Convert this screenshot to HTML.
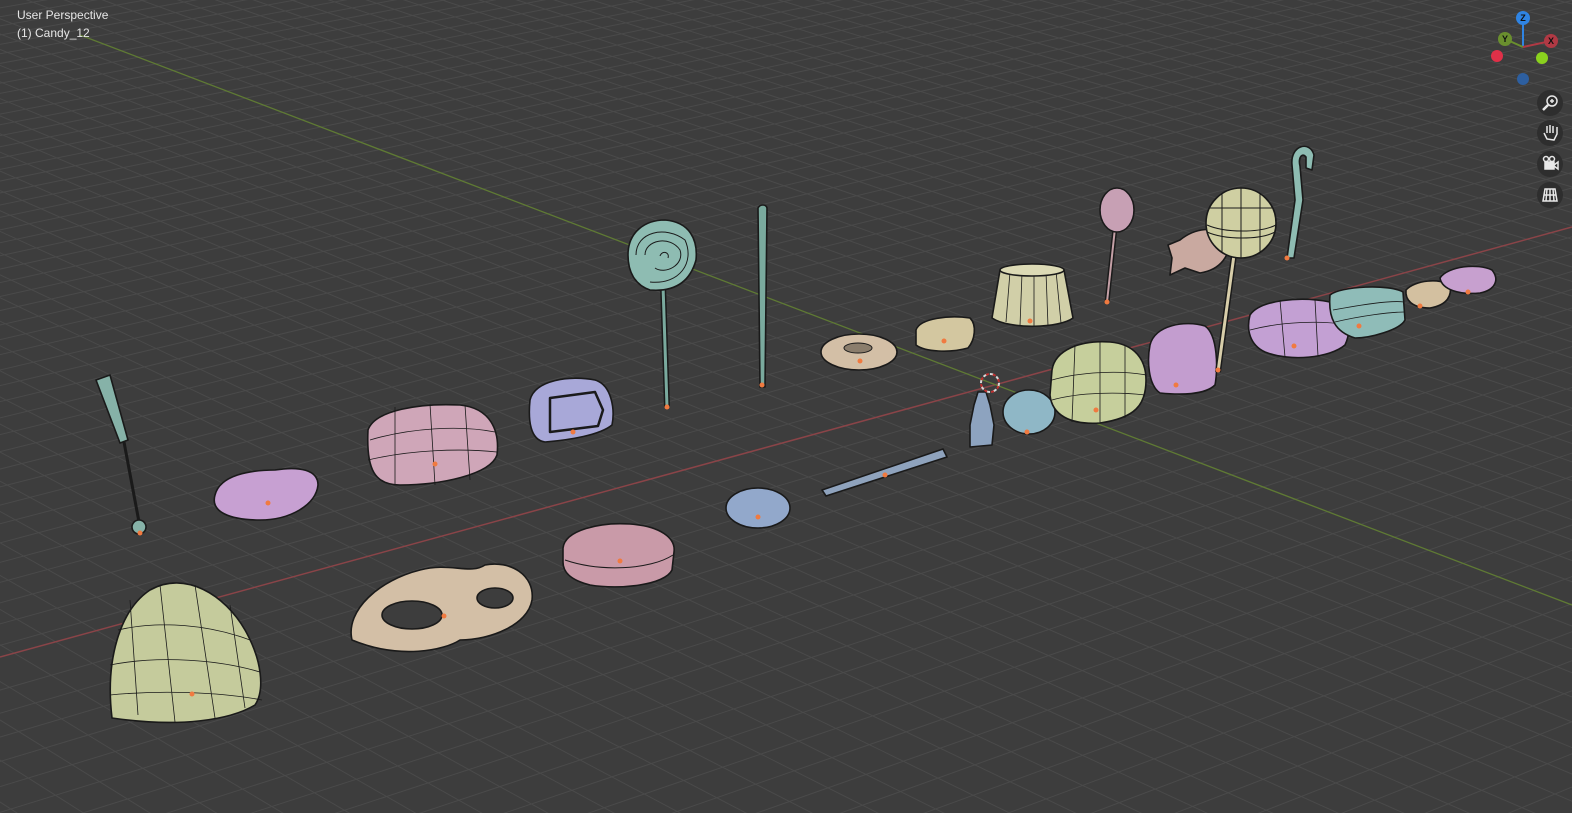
<!DOCTYPE html>
<html><head><meta charset="utf-8"><style>
html,body{margin:0;padding:0;background:#3d3d3d;overflow:hidden;width:1572px;height:813px}
#c{position:absolute;left:0;top:0}
.t{position:absolute;left:17px;color:#e6e6e6;font:12px "Liberation Sans",sans-serif}
</style></head><body>
<svg id="c" width="1572" height="813" viewBox="0 0 1572 813">
<rect width="1572" height="813" fill="#3d3d3d"/>
<g id="grid" stroke="#4a4a4a" stroke-width="1"></g>
<line x1="0" y1="657" x2="1572" y2="227" stroke="#8a4448" stroke-width="1.5"/>
<line x1="80" y1="35" x2="1572" y2="605" stroke="#5f7a34" stroke-width="1.3"/>
<g stroke="#1a1a1a" stroke-width="1.6" stroke-linejoin="round">
<path d="M112,718 C105,660 120,610 150,590 C185,570 225,595 245,630 C262,660 265,690 255,705 C230,720 180,728 112,718Z" fill="#c5cb9c"/>
<path d="M130,600 L138,715 M160,585 L175,722 M195,585 L215,718 M230,605 L245,708 M118,630 C160,620 210,625 250,640 M110,665 C160,655 220,660 260,672 M110,695 C160,690 220,692 262,700" fill="none" stroke-width="0.8"/>
<path d="M352,640 C345,610 380,580 420,570 C450,562 470,575 485,565 C510,560 535,575 532,600 C528,625 490,640 460,640 C445,650 400,660 352,640Z" fill="#d3bfa6"/>
<ellipse cx="412" cy="615" rx="30" ry="14" fill="#3d3d3d"/>
<ellipse cx="495" cy="598" rx="18" ry="10" fill="#3d3d3d"/>
<path d="M563,548 C565,530 600,522 630,524 C660,526 676,538 674,552 L672,570 C665,585 620,590 590,585 C570,580 563,572 563,562Z" fill="#c99aa8"/>
<path d="M565,560 C600,572 650,570 673,555" fill="none" stroke-width="1"/>
<ellipse cx="758" cy="508" rx="32" ry="20" fill="#92a8cb"/>
<path d="M822,490 L943,449 L947,457 L826,496Z" fill="#8fa3bd"/>
<path d="M215,495 C220,475 250,470 275,470 C300,466 318,470 318,485 C316,505 290,520 260,520 C230,520 210,512 215,495Z" fill="#c7a0d2"/>
<path d="M368,430 C375,410 420,403 460,405 C490,408 500,430 497,455 C490,475 440,485 400,485 C375,485 366,470 368,430Z" fill="#cfa6b8"/>
<path d="M370,440 C410,428 460,425 495,432 M368,460 C410,450 460,448 497,452 M395,407 L395,484 M430,404 L435,485 M465,405 L470,480" fill="none" stroke-width="0.8"/>
<path d="M530,400 C535,380 570,375 595,380 C612,385 615,410 612,425 C600,435 570,440 545,442 C530,440 528,420 530,400Z" fill="#a8a8d8"/>
<path d="M550,398 L595,392 L603,410 L598,426 L550,432Z" fill="none" stroke-width="2.5"/>
<path d="M96,380 L110,375 L128,440 L120,443Z" fill="#86b2a8"/>
<line x1="124" y1="442" x2="139" y2="522" stroke-width="3"/>
<circle cx="139" cy="527" r="7" fill="#86b2a8"/>
<line x1="663" y1="285" x2="667" y2="407" stroke-width="6"/>
<line x1="663" y1="285" x2="667" y2="407" stroke="#7aaa9e" stroke-width="3"/>
<path d="M628,255 C628,232 645,220 665,220 C690,222 698,240 696,260 C690,282 675,292 650,290 C635,285 628,272 628,255Z" fill="#8ebcb2"/>
<path d="M645,255 C645,240 670,235 680,250 C685,265 665,275 655,268 M660,256 C662,250 670,252 668,258 M636,255 C636,232 665,225 685,240 C695,262 680,285 650,282" fill="none" stroke-width="1"/>
<path d="M758,208 C760,204 766,204 767,208 L765,387 L760,387Z" fill="#7aaa9e"/>
<ellipse cx="859" cy="352" rx="38" ry="18" fill="#d3bfa6"/>
<ellipse cx="858" cy="348" rx="14" ry="5" fill="#8a7d6c" stroke-width="1"/>
<path d="M916,330 C920,318 950,315 970,318 C977,325 975,340 968,348 C950,353 925,352 916,345Z" fill="#d3c7a0"/>
<path d="M1000,270 C1010,264 1060,264 1064,270 L1073,318 C1060,328 1010,330 992,318Z" fill="#d1cfa8"/>
<path d="M1010,272 L1006,322 M1022,273 L1020,326 M1034,273 L1034,327 M1046,272 L1048,326 M1056,271 L1061,323" fill="none" stroke-width="0.8"/>
<ellipse cx="1032" cy="270" rx="32" ry="6" fill="#dcdab5"/>
<path d="M974,405 L978,392 L986,392 L990,405 L994,425 L992,445 L970,447 L970,425Z" fill="#8da3bf"/>
<ellipse cx="1029" cy="412" rx="26" ry="22" fill="#8fb7c6"/>
<path d="M1052,370 C1055,350 1080,340 1110,342 C1135,344 1146,360 1146,380 C1146,405 1135,418 1100,423 C1070,425 1052,415 1050,395Z" fill="#c6cf9c"/>
<path d="M1052,380 C1080,372 1120,370 1146,375 M1052,400 C1080,392 1120,392 1145,395 M1075,345 L1072,422 M1100,342 L1100,423 M1125,346 L1125,418" fill="none" stroke-width="0.8"/>
<path d="M1150,345 C1155,325 1185,320 1205,326 C1218,335 1218,370 1215,385 C1205,395 1180,395 1160,393 C1148,385 1147,360 1150,345Z" fill="#c39dcf"/>
<line x1="1234" y1="255" x2="1218" y2="372" stroke-width="6"/>
<line x1="1234" y1="255" x2="1218" y2="372" stroke="#d8ceaa" stroke-width="3"/>
<path d="M1168,245 L1180,240 C1195,228 1215,225 1228,238 C1232,255 1220,270 1200,273 L1185,268 L1170,275 L1172,258Z" fill="#c9a9a0"/>
<circle cx="1241" cy="223" r="35" fill="#cfcfa2"/>
<path d="M1207,225 C1225,233 1260,233 1276,225 M1207,232 C1225,240 1260,240 1275,232 M1241,188 L1241,258 M1222,194 L1222,252 M1260,194 L1260,252 M1210,208 L1272,208" fill="none" stroke-width="1"/>
<line x1="1115" y1="228" x2="1107" y2="302" stroke-width="5"/>
<line x1="1115" y1="228" x2="1107" y2="302" stroke="#c4a0a6" stroke-width="2"/>
<ellipse cx="1117" cy="210" rx="17" ry="22" fill="#c7a0b4"/>
<path d="M1287,258 L1295,200 L1292,165 C1290,145 1310,140 1314,155 L1312,170 L1306,168 L1306,157 C1302,152 1298,158 1300,166 L1303,200 L1294,258Z" fill="#8ebcb2"/>
<path d="M1250,315 C1260,300 1300,296 1330,302 C1350,310 1352,330 1345,345 C1330,358 1290,362 1265,352 C1250,345 1246,330 1250,315Z" fill="#c3a0d3"/>
<path d="M1250,330 C1280,322 1320,320 1348,325 M1280,300 L1285,357 M1315,300 L1318,356" fill="none" stroke-width="0.8"/>
<path d="M1330,295 C1340,286 1390,284 1403,292 L1405,320 C1400,330 1370,338 1355,338 C1335,332 1328,318 1330,295Z" fill="#8fbcb8"/>
<path d="M1333,310 C1360,305 1390,300 1404,302 M1335,322 C1360,316 1390,312 1404,312" fill="none" stroke-width="0.8"/>
<path d="M1406,290 C1415,280 1440,278 1450,285 C1452,295 1448,305 1430,308 C1412,308 1405,300 1406,290Z" fill="#d3c0a0"/>
<path d="M1440,278 C1448,266 1478,263 1492,270 C1500,280 1495,290 1480,293 C1460,295 1442,290 1440,278Z" fill="#c7a0cf"/>
</g>
<circle cx="990" cy="383" r="9" fill="none" stroke="#d8d8d8" stroke-width="2" stroke-dasharray="4 3"/>
<circle cx="990" cy="383" r="9" fill="none" stroke="#c03030" stroke-width="2" stroke-dasharray="3 4" stroke-dashoffset="4"/>
<g fill="#f07a40">
<circle cx="192" cy="694" r="2.5"/><circle cx="444" cy="616" r="2.5"/><circle cx="620" cy="561" r="2.5"/><circle cx="758" cy="517" r="2.5"/><circle cx="885" cy="475" r="2.5"/><circle cx="268" cy="503" r="2.5"/><circle cx="435" cy="464" r="2.5"/><circle cx="573" cy="432" r="2.5"/><circle cx="140" cy="533" r="2.5"/><circle cx="667" cy="407" r="2.5"/><circle cx="762" cy="385" r="2.5"/><circle cx="860" cy="361" r="2.5"/><circle cx="944" cy="341" r="2.5"/><circle cx="1030" cy="321" r="2.5"/><circle cx="1027" cy="432" r="2.5"/><circle cx="1096" cy="410" r="2.5"/><circle cx="1176" cy="385" r="2.5"/><circle cx="1294" cy="346" r="2.5"/><circle cx="1359" cy="326" r="2.5"/><circle cx="1420" cy="306" r="2.5"/><circle cx="1468" cy="292" r="2.5"/><circle cx="1107" cy="302" r="2.5"/><circle cx="1287" cy="258" r="2.5"/><circle cx="1218" cy="370" r="2.5"/>
</g>
<line x1="1523" y1="47" x2="1523" y2="20" stroke="#2f84e3" stroke-width="2"/>
<line x1="1523" y1="47" x2="1505" y2="39" stroke="#6a8f2e" stroke-width="2"/>
<line x1="1523" y1="47" x2="1551" y2="41" stroke="#b03944" stroke-width="2"/>
<circle cx="1497" cy="56" r="6" fill="#e03048"/>
<circle cx="1542" cy="58" r="6" fill="#8ad11e"/>
<circle cx="1523" cy="79" r="6" fill="#2d5fa0"/>
<circle cx="1523" cy="18" r="7" fill="#2f84e3"/>
<circle cx="1505" cy="39" r="7" fill="#6a8f2e"/>
<circle cx="1551" cy="41" r="7" fill="#b03944"/>
<g font-family="Liberation Sans,sans-serif" font-size="9" font-weight="bold" fill="#101010" text-anchor="middle">
<text x="1523" y="21">Z</text><text x="1505" y="42">Y</text><text x="1551" y="44">X</text></g>
<g fill="#2e2e2e"><circle cx="1550" cy="103" r="13"/><circle cx="1550" cy="133" r="13"/><circle cx="1550" cy="164" r="13"/><circle cx="1550" cy="195" r="13"/></g>
<g stroke="#e8e8e8" fill="none" stroke-width="1.5">
<circle cx="1552" cy="101" r="5"/><line x1="1548" y1="105" x2="1543" y2="110" stroke-width="2.5"/>
<line x1="1550" y1="101" x2="1554" y2="101"/><line x1="1552" y1="99" x2="1552" y2="103"/>
<path d="M1544,133 L1547,139 L1554,140 L1557,134 L1557,127 M1547,133 L1547,126 M1550,133 L1550,125 M1553,133 L1553,126"/>
<rect x="1545" y="162" width="9" height="7" fill="#e8e8e8"/><circle cx="1546" cy="159" r="2.5"/><circle cx="1552" cy="159" r="2.5"/><path d="M1554,165 L1558,162 L1558,169 L1554,166"/>
<path d="M1545,189 L1555,189 L1557,201 L1543,201Z M1550,189 L1550,201 M1544,195 L1556,195 M1547,189 L1546,201 M1553,189 L1554,201"/>
</g>
</svg>
<div class="t" style="top:8px">User Perspective</div>
<div class="t" style="top:26px">(1) Candy_12</div>
<script>
(function(){
var O=[996,384],VX=[6000,-1040],VY=[-3000,-1140],p=0.0058,q=0.007;
function P(u,v){var d=1+u*p+v*q;return [(O[0]+u*p*VX[0]+v*q*VY[0])/d,(O[1]+u*p*VX[1]+v*q*VY[1])/d];}
var g=document.getElementById('grid'),s='',N=80,e=0.03;
for(var u=-N;u<=N;u++){if(u===0)continue;var v0=Math.max(-N,(e-1-u*p)/q);if(v0>N)continue;var a=P(u,v0),b=P(u,N);
s+='<line x1="'+a[0]+'" y1="'+a[1]+'" x2="'+b[0]+'" y2="'+b[1]+'"/>';}
for(var v=-N;v<=N;v++){if(v===0)continue;var u0=Math.max(-N,(e-1-v*q)/p);if(u0>N)continue;var a=P(u0,v),b=P(N,v);
s+='<line x1="'+a[0]+'" y1="'+a[1]+'" x2="'+b[0]+'" y2="'+b[1]+'"/>';}
g.innerHTML=s;
})();
</script>
</body></html>
